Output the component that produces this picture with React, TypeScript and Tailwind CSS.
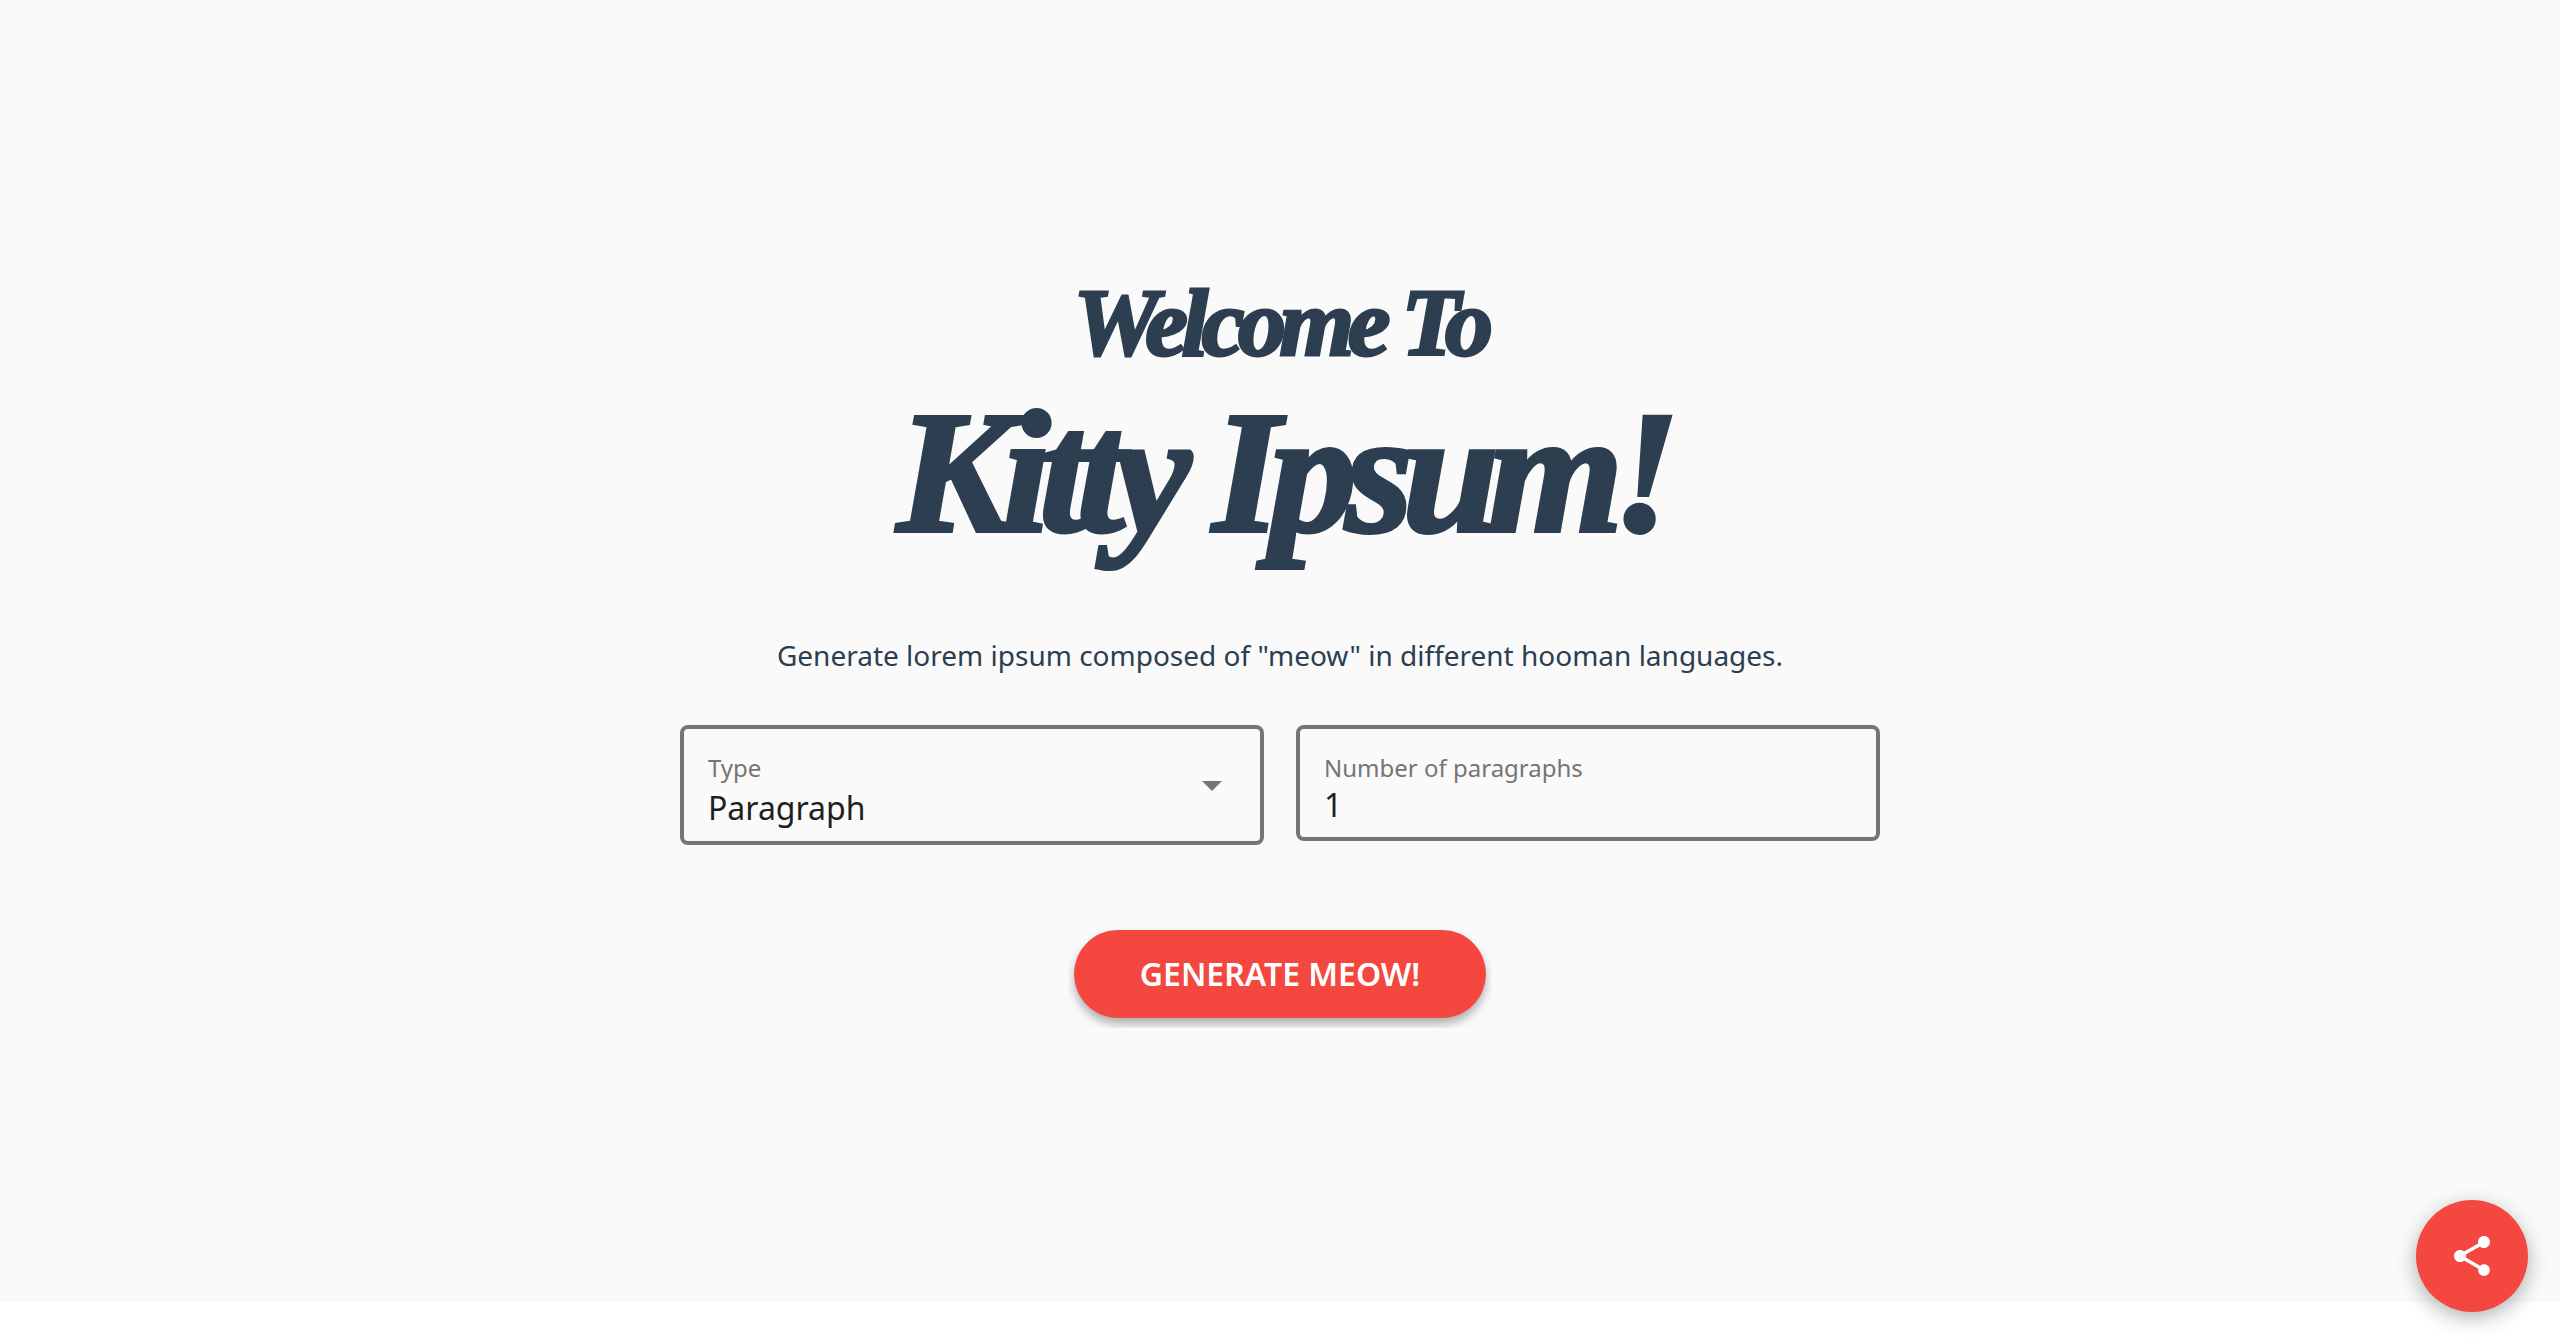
import React from 'react'

const body = "font-['Noto_Sans','Open_Sans',sans-serif]"
const script = "font-['Liberation_Serif',serif] italic font-bold text-[#2c3e50]"

const Field = ({ label, value, arrow, tall }: { label: string; value: string; arrow?: boolean; tall?: boolean }) => (
  <div className={`relative flex-1 border-4 border-[#757575] rounded-lg px-6 pt-[21px] ${tall ? 'h-[120px]' : 'h-[116px]'}`}>
    <div className="text-[24px] leading-[36px] text-[#757575]">{label}</div>
    <div className={`text-[32px] leading-[40px] text-[#1f1f1f] ${tall ? 'mt-[2px]' : '-mt-[1px]'}`}>{value}</div>
    {arrow && (
      <div className="absolute right-[38px] top-[52px] w-0 h-0 border-x-[10px] border-x-transparent border-t-[10px] border-t-[#757575]" />
    )}
  </div>
)

export default function App() {
  return (
    <div className={`relative ${body}`}>
      <div className="h-[1302px] bg-[#fafafa] flex flex-col items-center pt-[267px]">
        <h1 className={`text-[96px] leading-[112px] tracking-[-6.4px] [-webkit-text-stroke:3px_#2c3e50] ${script}`}>Welcome To</h1>
        <h1 className={`text-[174px] leading-[200px] tracking-[-11px] -mt-[6px] ml-[6px] [-webkit-text-stroke:4px_#2c3e50] ${script}`}>Kitty Ipsum!</h1>
        <p className="mt-[62px] text-[28px] leading-[40px] text-[#2c3e50]">
          Generate lorem ipsum composed of "meow" in different hooman languages.
        </p>
        <div className="mt-[50px] w-[1200px] flex items-start gap-8">
          <Field label="Type" value="Paragraph" arrow tall />
          <Field label="Number of paragraphs" value="1" />
        </div>
        <div className="mt-[81px] overflow-hidden px-[6px] pt-[4px] pb-[10px]">
          <button className="w-[412px] h-[88px] rounded-full bg-[#f44740] text-white text-[32px] font-semibold shadow-[0_6px_10px_rgba(0,0,0,0.3)]">
            GENERATE MEOW!
          </button>
        </div>
      </div>
      <button className="fixed right-8 bottom-8 w-28 h-28 rounded-full bg-[#f44740] flex items-center justify-center shadow-[0_6px_20px_rgba(0,0,0,0.3)]">
        <svg viewBox="0 0 24 24" className="w-12 h-12" fill="#fff">
          <path d="M18 16.08c-.76 0-1.44.3-1.96.77L8.91 12.7c.05-.23.09-.46.09-.7s-.04-.47-.09-.7l7.05-4.11c.54.5 1.25.81 2.04.81 1.66 0 3-1.34 3-3s-1.34-3-3-3-3 1.34-3 3c0 .24.04.47.09.7L8.04 9.81C7.5 9.31 6.79 9 6 9c-1.66 0-3 1.34-3 3s1.34 3 3 3c.79 0 1.5-.31 2.04-.81l7.12 4.16c-.05.21-.08.43-.08.65 0 1.61 1.31 2.92 2.92 2.92 1.61 0 2.92-1.31 2.92-2.92s-1.31-2.92-2.92-2.92z" />
        </svg>
      </button>
    </div>
  )
}
